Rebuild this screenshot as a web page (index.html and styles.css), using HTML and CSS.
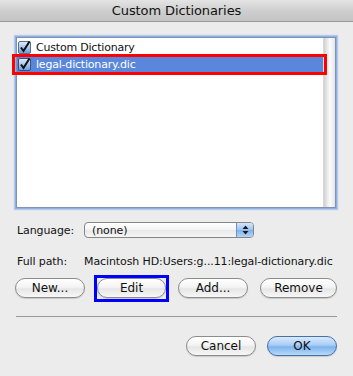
FILE: index.html
```html
<!DOCTYPE html>
<html>
<head>
<meta charset="utf-8">
<link rel="stylesheet" href="styles.css">
</head>
<body>
<div class="window">
  <div class="titlebar">Custom Dictionaries</div>
  <div class="main">
    <div class="list">
      <div class="rows">
        <div class="row">
          <svg class="cb" width="13" height="13" viewBox="0 0 13 13">
            <defs>
              <linearGradient id="g1" x1="0" y1="0" x2="0" y2="1">
                <stop offset="0" stop-color="#e3eefb"/>
                <stop offset="0.5" stop-color="#a9c6ec"/>
                <stop offset="1" stop-color="#6f9bd6"/>
              </linearGradient>
            </defs>
            <rect x="0.5" y="0.5" width="12" height="12" rx="1.5" fill="url(#g1)" stroke="#5b6e8f"/>
            <path d="M3 6.5 L5.5 10 L11.5 0.5" fill="none" stroke="#111" stroke-width="2"/>
          </svg>
          <span>Custom Dictionary</span>
        </div>
        <div class="row selected">
          <svg class="cb" width="13" height="13" viewBox="0 0 13 13">
            <defs>
              <linearGradient id="g2" x1="0" y1="0" x2="0" y2="1">
                <stop offset="0" stop-color="#e3eefb"/>
                <stop offset="0.5" stop-color="#a9c6ec"/>
                <stop offset="1" stop-color="#6f9bd6"/>
              </linearGradient>
            </defs>
            <rect x="0.5" y="0.5" width="12" height="12" rx="1.5" fill="url(#g2)" stroke="#3d5178"/>
            <path d="M3 6.5 L5.5 10 L11.5 0.5" fill="none" stroke="#111" stroke-width="2"/>
          </svg>
          <span>legal-dictionary.dic</span>
          <div class="mark-red"></div>
        </div>
      </div>
      <div class="scroll"></div>
    </div>

    <div class="field lang">
      <span class="label">Language:</span>
      <div class="select">
        <span class="sel-text">(none)</span>
        <span class="sel-arrows">
          <svg width="7" height="10" viewBox="0 0 7 10"><path d="M3.5 0.5 L6.5 4 L0.5 4 Z M0.5 6 L6.5 6 L3.5 9.5 Z" fill="#1a1a1a"/></svg>
        </span>
      </div>
    </div>

    <div class="field path">
      <span class="label">Full path:</span>
      <span class="path-text">Macintosh HD:Users:g...11:legal-dictionary.dic</span>
    </div>

    <div class="buttons">
      <button class="btn w70">New...</button>
      <button class="btn w69 mark-blue">Edit</button>
      <button class="btn w70">Add...</button>
      <button class="btn w77">Remove</button>
    </div>

    <div class="sep"></div>

    <div class="actions">
      <button class="btn w70">Cancel</button>
      <button class="btn w70 default">OK</button>
    </div>
  </div>
</div>
</body>
</html>
```

FILE: styles.css
```css
html, body {
  margin: 0;
  padding: 0;
}
body {
  width: 353px;
  height: 376px;
  background: #ececec;
  font-family: "DejaVu Sans", sans-serif;
  color: #111;
  overflow: hidden;
}
.window {
  display: flex;
  flex-direction: column;
}
.titlebar {
  height: 21px;
  line-height: 21px;
  text-align: center;
  font-size: 13px;
  letter-spacing: -0.1px;
  color: #111;
  background: linear-gradient(#e4e4e4, #cfcfcf 50%, #c4c4c4);
  border-bottom: 1px solid #9a9a9a;
}
.main {
  display: flex;
  flex-direction: column;
  padding: 15px 0 0 16px;
}
.list {
  width: 320px;
  height: 171px;
  box-sizing: border-box;
  border: 1px solid #7f93b5;
  box-shadow: 0 0 0 1px #8fb0e2, 0 0 1px 2px #b3cbee;
  background: #fff;
  display: flex;
}
.rows {
  flex: 1;
  display: flex;
  flex-direction: column;
  padding-top: 1px;
}
.row {
  position: relative;
  height: 17px;
  display: flex;
  align-items: center;
  gap: 5px;
  font-size: 11px;
  letter-spacing: -0.2px;
  padding-left: 1px;
}
.row.selected {
  background: #5a87dc;
  color: #fff;
}
.cb {
  flex: none;
}
.mark-red {
  position: absolute;
  left: -5px;
  right: -4px;
  top: -2px;
  bottom: -2px;
  border: 3px solid #ff0000;
}
.scroll {
  width: 11px;
  background: linear-gradient(90deg, #cfcfcf, #f2f2f2 40%, #fafafa 60%, #e4e4e4);
  border-left: 1px solid #d8d8d8;
}
.field {
  display: flex;
  align-items: center;
  font-size: 11px;
  letter-spacing: -0.1px;
}
.label {
  width: 67px;
  padding-left: 1px;
}
.lang {
  margin-top: 14px;
  height: 16px;
}
.select {
  width: 170px;
  height: 16px;
  box-sizing: border-box;
  border: 1px solid #868686;
  border-radius: 4px;
  background: linear-gradient(#ffffff, #f3f3f3 50%, #e8e8e8 50%, #f6f6f6);
  display: flex;
  align-items: center;
  overflow: hidden;
}
.sel-text {
  flex: 1;
  padding-left: 7px;
}
.sel-arrows {
  width: 16px;
  height: 100%;
  display: flex;
  align-items: center;
  justify-content: center;
  background: linear-gradient(#d5e6fb, #9cc3f0 50%, #7fb0ea 50%, #b3d5f8);
  border-left: 1px solid #6f8fbf;
}
.path {
  margin-top: 16px;
  height: 14px;
}
.buttons {
  margin-top: 10px;
  margin-left: -1px;
  width: 322px;
  display: flex;
  justify-content: space-between;
}
.btn {
  height: 20px;
  box-sizing: border-box;
  border: 1px solid #8c8c8c;
  border-radius: 10px;
  background: linear-gradient(#ffffff, #f4f4f4 45%, #e6e6e6 55%, #f7f7f7);
  box-shadow: 0 1px 1px rgba(0,0,0,0.15);
  font-family: "DejaVu Sans", sans-serif;
  font-size: 12px;
  color: #111;
  padding: 0;
  margin: 0;
  line-height: 18px;
}
.w70 { width: 70px; }
.w69 { width: 69px; }
.w77 { width: 77px; }
.mark-blue {
  position: relative;
}
.mark-blue::after {
  content: "";
  position: absolute;
  left: -4px;
  right: -4px;
  top: -4px;
  bottom: -5px;
  border: 3px solid #0000ff;
}
.sep {
  margin-top: 18px;
  width: 321px;
  height: 1px;
  background: #9a9a9a;
}
.actions {
  margin-top: 19px;
  width: 321px;
  display: flex;
  justify-content: flex-end;
  gap: 11px;
}
.default {
  border-color: #4a6fa8;
  background: linear-gradient(#d9eafc, #a8cdf6 45%, #7eb3ee 55%, #b7dafb);
}
```
